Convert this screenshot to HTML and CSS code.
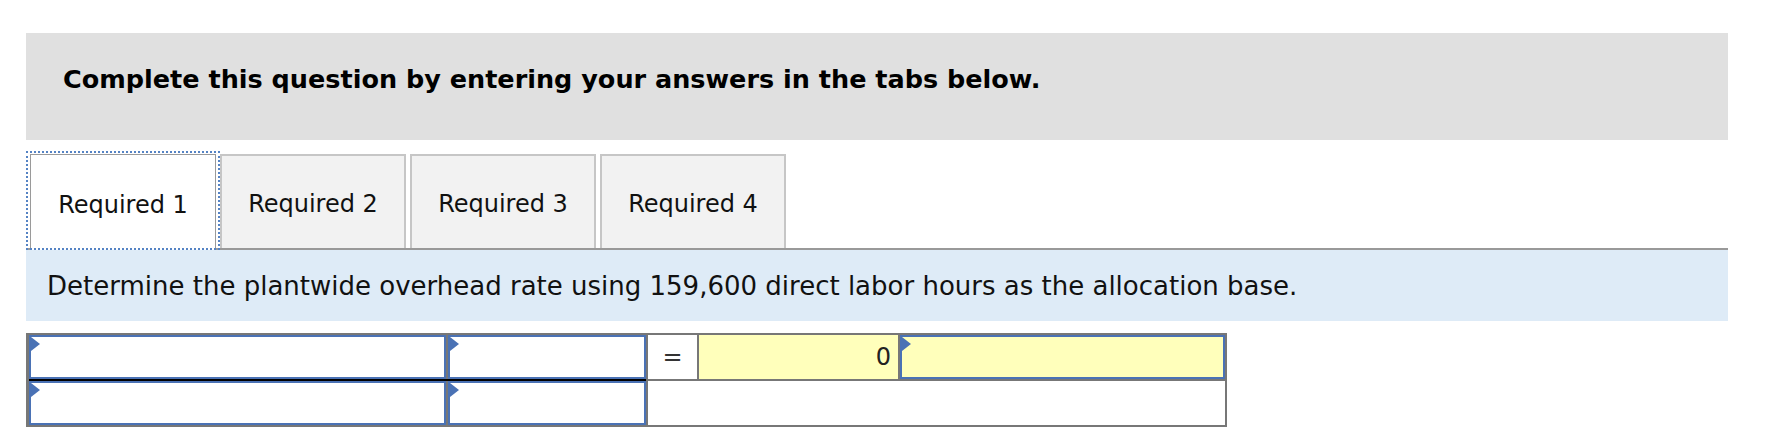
FILE: index.html
```html
<!DOCTYPE html>
<html lang="en">
<head>
    <meta charset="UTF-8">
    <title>Required 1</title>
    <link rel="stylesheet" href="styles.css">
</head>
<body>
    <div class="container">
        <div class="instructions">
            <h2>Complete this question by entering your answers in the tabs below.</h2>
        </div>

        <div class="tab-list">
            <div class="tab active">Required 1</div>
            <div class="tab">Required 2</div>
            <div class="tab">Required 3</div>
            <div class="tab">Required 4</div>
        </div>

        <div class="tab-prompt">
            Determine the plantwide overhead rate using 159,600 direct labor hours as the allocation base.
        </div>

        <div class="calc">
            <div class="cell field top"><input type="text"></div>
            <div class="cell field top"><input type="text"></div>
            <div class="cell sign">=</div>
            <div class="cell result">0</div>
            <div class="cell field yellow"><input type="text"></div>

            <div class="divide-rule"></div>

            <div class="cell field bottom"><input type="text"></div>
            <div class="cell field bottom"><input type="text"></div>
            <div class="cell blank"></div>
        </div>
    </div>
</body>
</html>
```

FILE: styles.css
```css
body {
    margin: 0;
    background: #fff;
    font-family: "DejaVu Sans", Verdana, sans-serif;
    font-size: 24px;
    color: #111;
}
.container {
    width: 1702px;
    margin: 33px 0 0 26px;
}
.instructions {
    background: #e0e0e0;
    height: 107px;
    box-sizing: border-box;
    padding: 31px 37px 0;
}
.instructions h2 {
    margin: 0;
    font-size: 25.5px;
    font-weight: bold;
    color: #000;
    line-height: 30px;
}
.tab-list {
    display: flex;
    align-items: flex-end;
    gap: 4px;
    margin-top: 14px;
    padding-left: 4px;
    border-bottom: 2px solid #999;
}
.tab {
    width: 186px;
    height: 94px;
    box-sizing: border-box;
    display: flex;
    align-items: center;
    justify-content: center;
    padding-top: 4px;
    background: #f2f2f2;
    border: 2px solid #c6c6c6;
    border-bottom: none;
    color: #111;
}
.tab.active {
    position: relative;
    height: 96px;
    margin-bottom: -2px;
    background: #fff;
    border-color: #9a9a9a;
    border-width: 1px;
}
.tab.active::after {
    content: "";
    position: absolute;
    top: -4px;
    left: -5px;
    right: -5px;
    bottom: 0;
    border: 2px dotted #5583c4;
}
.tab-prompt {
    background: #deebf7;
    height: 71px;
    box-sizing: border-box;
    padding: 0 21px;
    display: flex;
    align-items: center;
    font-size: 26px;
    color: #111;
}
.calc {
    display: grid;
    grid-template-columns: 417px 198px 49px 199px 325px;
    grid-template-rows: 44px 2px 44px;
    column-gap: 2px;
    width: max-content;
    margin-top: 12px;
    padding: 2px 2px 2px 3px;
    background: #777;
}
.cell {
    background: #fff;
    box-sizing: border-box;
}
.top {
    grid-row: 1;
}
.bottom {
    grid-row: 3;
}
.field {
    position: relative;
}
.field input {
    display: block;
    width: 100%;
    height: 100%;
    box-sizing: border-box;
    margin: 0;
    border: 2px solid #4a72b5;
    background: #fff;
    font: inherit;
    outline: none;
}
.field::before {
    content: "";
    position: absolute;
    top: 2px;
    left: 2px;
    border-left: 9px solid #4a72b5;
    border-top: 7px solid transparent;
    border-bottom: 7px solid transparent;
}
.field.yellow {
    grid-row: 1;
    grid-column: 5;
}
.field.yellow input {
    background: #ffffbb;
}
.sign {
    grid-row: 1;
    grid-column: 3;
    display: flex;
    align-items: center;
    justify-content: center;
    color: #333;
}
.result {
    grid-row: 1;
    grid-column: 4;
    background: #ffffbb;
    display: flex;
    align-items: center;
    justify-content: flex-end;
    padding-right: 7px;
    color: #222;
}
.divide-rule {
    grid-row: 2;
    grid-column: 1 / 3;
    background: #000;
}
.blank {
    grid-row: 3;
    grid-column: 3 / 6;
}
```
